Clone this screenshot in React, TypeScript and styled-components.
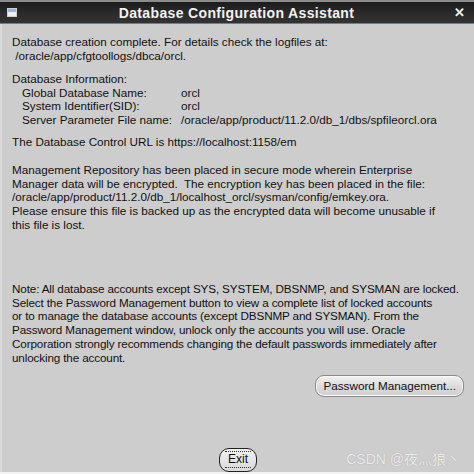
import React from "react";
import styled, { createGlobalStyle } from "styled-components";

const Global = createGlobalStyle`
  html, body { margin: 0; padding: 0; background: #f4f4f4; }
  #root { width: 474px; height: 474px; }
`;

const Window = styled.div`
  width: 474px;
  height: 474px;
  display: flex;
  flex-direction: column;
  background: #cdcdcd;
  position: relative;
  overflow: hidden;
  font-family: "Liberation Sans", Arial, sans-serif;
  color: #111;
`;

const TitleBar = styled.div`
  height: 21px;
  flex: none;
  display: flex;
  align-items: center;
  padding: 0 9px 0 7px;
  border-top: 2px solid #8c8c8c;
  border-bottom: 1px solid #6f7e90;
  background: linear-gradient(#1c1c1c, #2c2c2c 60%, #333333);
  color: #f2f2f2;
`;

const WindowIcon = styled.div`
  width: 10px;
  height: 9px;
  flex: none;
  background: linear-gradient(#9fb6d8 0 3px, #f0f0f0 3px);
  border: 1px solid #d0d0d0;
  box-sizing: border-box;
`;

const Title = styled.div`
  flex: 1;
  text-align: center;
  font-weight: bold;
  font-size: 14px;
  letter-spacing: 0.35px;
  padding-left: 3px;
`;

const Close = styled.div`
  width: 12px;
  flex: none;
  font-size: 13px;
  font-weight: bold;
  text-align: center;
`;

const Body = styled.div`
  flex: 1;
  display: flex;
  flex-direction: column;
  padding: 11px 10px 0 10px;
  border-left: 2px solid #dadada;
`;

const Para = styled.div<{ $gap?: number; $tight?: boolean }>`
  font-size: 11.7px;
  line-height: 13.7px;
  white-space: pre;
  letter-spacing: ${(p) => (p.$tight ? "-0.14px" : "0")};
  margin-top: ${(p) => p.$gap ?? 0}px;
`;

const InfoRow = styled.div`
  display: grid;
  grid-template-columns: 159px 1fr;
  padding-left: 10px;
`;

const ButtonRow = styled.div<{ $gap: number; $align: string }>`
  display: flex;
  justify-content: ${(p) => p.$align};
  margin-top: ${(p) => p.$gap}px;
`;

const PillButton = styled.div`
  height: 22px;
  box-sizing: border-box;
  padding: 0 7px;
  display: flex;
  align-items: center;
  border: 1px solid #8a8a8a;
  border-radius: 9px;
  background: linear-gradient(#f2f2f2, #dcdcdc 50%, #cfcfcf);
  box-shadow: inset 0 0 0 1px #fafafa;
  font-size: 11.7px;
  color: #111;
`;

const ExitButton = styled.div`
  height: 24px;
  width: 38px;
  box-sizing: border-box;
  border: 1.5px solid #222;
  border-radius: 10px;
  background: linear-gradient(#f0f0f0, #dadada);
  display: flex;
  align-items: center;
  justify-content: center;
`;

const ExitLabel = styled.span`
  font-size: 12px;
  border-top: 1px dotted #333;
  border-bottom: 1px dotted #333;
  padding: 1px 3px;
  line-height: 13px;
`;

const BottomStrip = styled.div`
  height: 3px;
  flex: none;
  background: #f3f3f3;
  margin-top: auto;
`;

const Watermark = styled.div`
  position: absolute;
  right: 14px;
  bottom: 6px;
  font-family: "Liberation Sans", "Noto Sans CJK SC", sans-serif;
  font-size: 14px;
  color: #f1f1f1;
  text-shadow: 0 0 1px #9a9a9a;
  opacity: 0.85;
`;

export default function App() {
  return (
    <>
      <Global />
      <Window>
        <TitleBar>
          <WindowIcon />
          <Title>Database Configuration Assistant</Title>
          <Close>✕</Close>
        </TitleBar>
        <Body>
          <Para>
            {"Database creation complete. For details check the logfiles at:\n /oracle/app/cfgtoollogs/dbca/orcl."}
          </Para>
          <Para $gap={9.6}>
            Database Information:
            <InfoRow>
              <span>Global Database Name:</span>
              <span>orcl</span>
            </InfoRow>
            <InfoRow>
              <span>System Identifier(SID):</span>
              <span>orcl</span>
            </InfoRow>
            <InfoRow>
              <span>Server Parameter File name:</span>
              <span>/oracle/app/product/11.2.0/db_1/dbs/spfileorcl.ora</span>
            </InfoRow>
          </Para>
          <Para $gap={8.2}>The Database Control URL is https://localhost:1158/em</Para>
          <Para $gap={14.3}>
            {"Management Repository has been placed in secure mode wherein Enterprise\nManager data will be encrypted.  The encryption key has been placed in the file:\n/oracle/app/product/11.2.0/db_1/localhost_orcl/sysman/config/emkey.ora.\nPlease ensure this file is backed up as the encrypted data will become unusable if\nthis file is lost."}
          </Para>
          <Para $gap={50.5} $tight>
            {"Note: All database accounts except SYS, SYSTEM, DBSNMP, and SYSMAN are locked.\nSelect the Password Management button to view a complete list of locked accounts\nor to manage the database accounts (except DBSNMP and SYSMAN). From the\nPassword Management window, unlock only the accounts you will use. Oracle\nCorporation strongly recommends changing the default passwords immediately after\nunlocking the account."}
          </Para>
          <ButtonRow $gap={10.6} $align="flex-end">
            <PillButton>Password Management...</PillButton>
          </ButtonRow>
          <ButtonRow $gap={51} $align="center">
            <ExitButton>
              <ExitLabel>Exit</ExitLabel>
            </ExitButton>
          </ButtonRow>
        </Body>
        <BottomStrip />
        <Watermark>CSDN @夜灬狼丶</Watermark>
      </Window>
    </>
  );
}
